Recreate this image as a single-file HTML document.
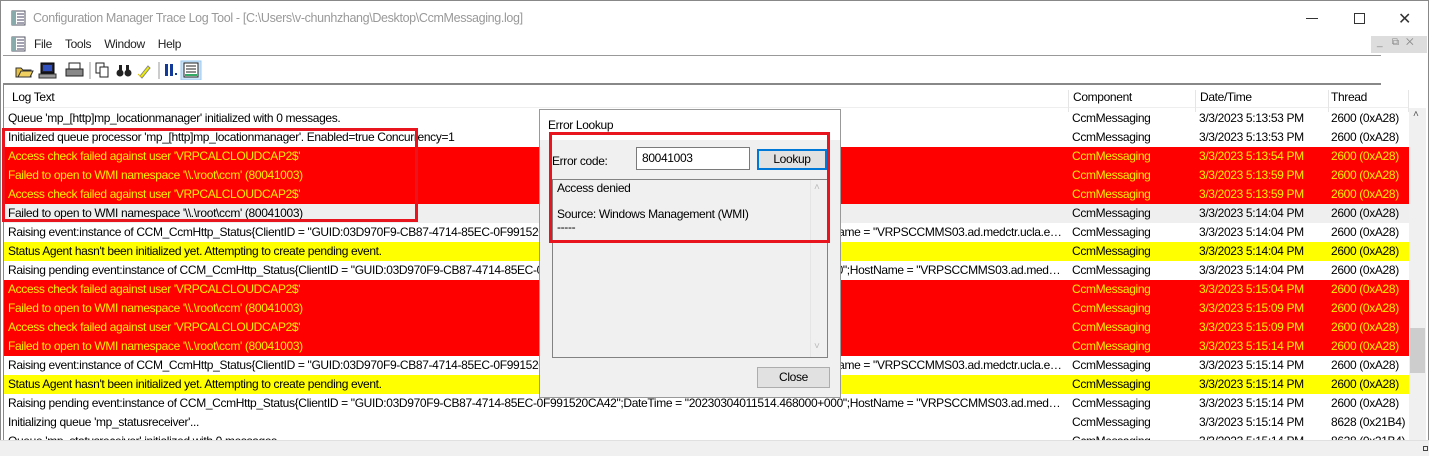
<!DOCTYPE html>
<html><head><style>
*{margin:0;padding:0;box-sizing:border-box}
body{width:1429px;height:456px;overflow:hidden;background:#f0f0f0;font-family:"Liberation Sans",sans-serif;font-size:12px;color:#000;position:relative;letter-spacing:-0.35px}
.abs{position:absolute}
.win{left:0;top:0;width:1429px;height:456px;background:#fff;border:1px solid #888}
.title{left:33px;top:11px;font-size:12.5px;color:#999;white-space:nowrap}
.menu{left:34px;top:37px;font-size:12px;color:#222}
.menu span{margin-right:13px}
.row{position:absolute;left:4px;width:1405px;height:19px;line-height:19px;white-space:nowrap}
.row .t{position:absolute;left:4px;width:1058px;overflow:hidden;text-overflow:ellipsis}
.row .c{position:absolute;left:1068px}
.row .d{position:absolute;left:1195px}
.row .h{position:absolute;left:1327px}
.r{background:#ff0000;color:#ffee00}
.y{background:#ffff00}
.s{background:#efefef}
.hdr{left:4px;top:86px;width:1405px;height:22px;background:#fff;border-bottom:1px solid #eee}
.hdr div{position:absolute;top:4px}
.sep{position:absolute;top:0;width:1px;height:22px;background:#e5e5e5}
</style></head><body>
<div class="abs win"></div>
<svg class="abs" style="left:11px;top:10px" width="16" height="16"><rect x="1" y="1" width="13" height="14" fill="#fff" stroke="#556"/><rect x="1" y="1" width="4" height="14" fill="#8aa"/><g stroke="#446"><line x1="6" y1="4" x2="13" y2="4"/><line x1="6" y1="7" x2="13" y2="7"/><line x1="6" y1="10" x2="13" y2="10"/><line x1="6" y1="13" x2="13" y2="13"/></g></svg>
<div class="abs title">Configuration Manager Trace Log Tool - [C:\Users\v-chunhzhang\Desktop\CcmMessaging.log]</div>
<div class="abs" style="left:1306px;top:18px;width:12px;height:1px;background:#333"></div>
<div class="abs" style="left:1354px;top:13px;width:11px;height:11px;border:1px solid #333"></div>
<div class="abs" style="left:1398px;top:9px;font-size:16px;color:#333">✕</div>
<svg class="abs" style="left:11px;top:36px" width="16" height="16"><rect x="1" y="1" width="13" height="14" fill="#fff" stroke="#556"/><rect x="1" y="1" width="4" height="14" fill="#8aa"/><g stroke="#446"><line x1="6" y1="4" x2="13" y2="4"/><line x1="6" y1="7" x2="13" y2="7"/><line x1="6" y1="10" x2="13" y2="10"/><line x1="6" y1="13" x2="13" y2="13"/></g></svg>
<div class="abs menu"><span>File</span><span>Tools</span><span>Window</span><span>Help</span></div>
<div class="abs" style="left:1371px;top:36px;width:56px;height:17px;background:#ddd"></div>
<div class="abs" style="left:1377px;top:37px;font-size:10px;color:#888">_&nbsp;&nbsp;&nbsp;&nbsp;⧉&nbsp;&nbsp;&nbsp;✕</div>
<div class="abs" style="left:3px;top:55px;width:1378px;height:1px;background:#999"></div>
<svg class="abs" style="left:14px;top:60px" width="210" height="20">
<path d="M2 8h5l2 2h8v7H2z" fill="#e8c040" stroke="#333"/><path d="M4 17l3-6h12l-3 6z" fill="#f0d060" stroke="#333"/>
<rect x="27" y="3" width="13" height="10" fill="#223" stroke="#000"/><rect x="29" y="5" width="9" height="6" fill="#3050c0"/><rect x="25" y="14" width="17" height="4" fill="#999" stroke="#333"/>
<rect x="52" y="9" width="17" height="7" fill="#888" stroke="#222"/><rect x="55" y="3" width="11" height="6" fill="#fff" stroke="#222"/>
<line x1="76" y1="2" x2="76" y2="19" stroke="#999"/>
<rect x="82" y="3" width="8" height="10" fill="#fff" stroke="#222"/><rect x="86" y="7" width="8" height="10" fill="#fff" stroke="#222"/>
<circle cx="106" cy="13" r="3.5" fill="#222"/><circle cx="114" cy="13" r="3.5" fill="#222"/><rect x="105" y="5" width="3" height="6" fill="#222"/><rect x="112" y="5" width="3" height="6" fill="#222"/>
<path d="M126 16l8-10 2 2-8 10z" fill="#ee0" stroke="#888"/><path d="M124 14l3 3" stroke="#e0c000"/>
<line x1="145" y1="2" x2="145" y2="19" stroke="#999"/>
<rect x="151" y="4" width="3" height="12" fill="#123a9a"/><rect x="156" y="4" width="3" height="12" fill="#123a9a"/><rect x="161" y="13" width="2" height="2" fill="#123a9a"/>
<rect x="167" y="1" width="20" height="19" fill="#cce4f7" stroke="#99c9ef"/><rect x="170" y="3" width="14" height="14" fill="#fff" stroke="#222"/><g stroke="#222"><line x1="172" y1="6" x2="182" y2="6"/><line x1="172" y1="9" x2="182" y2="9"/><line x1="172" y1="12" x2="182" y2="12"/></g><rect x="171" y="14" width="12" height="2" fill="#3a6"/>
</svg>
<div class="abs" style="left:3px;top:83px;width:1378px;height:2px;background:#888"></div>
<div class="abs" style="left:3px;top:85px;width:1px;height:355px;background:#888"></div>
<div class="abs hdr">
<div style="left:8px">Log Text</div><div class="sep" style="left:1064px"></div>
<div style="left:1069px">Component</div><div class="sep" style="left:1191px"></div>
<div style="left:1196px">Date/Time</div><div class="sep" style="left:1324px"></div>
<div style="left:1327px">Thread</div><div class="sep" style="left:1404px"></div>
</div>
<div class="row" style="top:109px"><span class="t">Queue 'mp_[http]mp_locationmanager' initialized with 0 messages.</span><span class="c">CcmMessaging</span><span class="d">3/3/2023 5:13:53 PM</span><span class="h">2600 (0xA28)</span></div>
<div class="row" style="top:128px"><span class="t">Initialized queue processor 'mp_[http]mp_locationmanager'. Enabled=true Concurrency=1</span><span class="c">CcmMessaging</span><span class="d">3/3/2023 5:13:53 PM</span><span class="h">2600 (0xA28)</span></div>
<div class="row r" style="top:147px"><span class="t">Access check failed against user 'VRPCALCLOUDCAP2$'</span><span class="c">CcmMessaging</span><span class="d">3/3/2023 5:13:54 PM</span><span class="h">2600 (0xA28)</span></div>
<div class="row r" style="top:166px"><span class="t">Failed to open to WMI namespace '\\.\root\ccm' (80041003)</span><span class="c">CcmMessaging</span><span class="d">3/3/2023 5:13:59 PM</span><span class="h">2600 (0xA28)</span></div>
<div class="row r" style="top:185px"><span class="t">Access check failed against user 'VRPCALCLOUDCAP2$'</span><span class="c">CcmMessaging</span><span class="d">3/3/2023 5:13:59 PM</span><span class="h">2600 (0xA28)</span></div>
<div class="row s" style="top:204px"><span class="t">Failed to open to WMI namespace '\\.\root\ccm' (80041003)</span><span class="c">CcmMessaging</span><span class="d">3/3/2023 5:14:04 PM</span><span class="h">2600 (0xA28)</span></div>
<div class="row" style="top:223px"><span class="t">Raising event:instance of CCM_CcmHttp_Status{ClientID = "GUID:03D970F9-CB87-4714-85EC-0F991520CA42";DateTime = "20230304011404.468000+000";HostName = "VRPSCCMMS03.ad.medctr.ucla.edu";HRESULT = "0x00000000";</span><span class="c">CcmMessaging</span><span class="d">3/3/2023 5:14:04 PM</span><span class="h">2600 (0xA28)</span></div>
<div class="row y" style="top:242px"><span class="t">Status Agent hasn't been initialized yet. Attempting to create pending event.</span><span class="c">CcmMessaging</span><span class="d">3/3/2023 5:14:04 PM</span><span class="h">2600 (0xA28)</span></div>
<div class="row" style="top:261px"><span class="t">Raising pending event:instance of CCM_CcmHttp_Status{ClientID = "GUID:03D970F9-CB87-4714-85EC-0F991520CA42";DateTime = "20230304011404.468000+000";HostName = "VRPSCCMMS03.ad.medctr.ucla.edu";</span><span class="c">CcmMessaging</span><span class="d">3/3/2023 5:14:04 PM</span><span class="h">2600 (0xA28)</span></div>
<div class="row r" style="top:280px"><span class="t">Access check failed against user 'VRPCALCLOUDCAP2$'</span><span class="c">CcmMessaging</span><span class="d">3/3/2023 5:15:04 PM</span><span class="h">2600 (0xA28)</span></div>
<div class="row r" style="top:299px"><span class="t">Failed to open to WMI namespace '\\.\root\ccm' (80041003)</span><span class="c">CcmMessaging</span><span class="d">3/3/2023 5:15:09 PM</span><span class="h">2600 (0xA28)</span></div>
<div class="row r" style="top:318px"><span class="t">Access check failed against user 'VRPCALCLOUDCAP2$'</span><span class="c">CcmMessaging</span><span class="d">3/3/2023 5:15:09 PM</span><span class="h">2600 (0xA28)</span></div>
<div class="row r" style="top:337px"><span class="t">Failed to open to WMI namespace '\\.\root\ccm' (80041003)</span><span class="c">CcmMessaging</span><span class="d">3/3/2023 5:15:14 PM</span><span class="h">2600 (0xA28)</span></div>
<div class="row" style="top:356px"><span class="t">Raising event:instance of CCM_CcmHttp_Status{ClientID = "GUID:03D970F9-CB87-4714-85EC-0F991520CA42";DateTime = "20230304011514.468000+000";HostName = "VRPSCCMMS03.ad.medctr.ucla.edu";HRESULT = "0x00000000";</span><span class="c">CcmMessaging</span><span class="d">3/3/2023 5:15:14 PM</span><span class="h">2600 (0xA28)</span></div>
<div class="row y" style="top:375px"><span class="t">Status Agent hasn't been initialized yet. Attempting to create pending event.</span><span class="c">CcmMessaging</span><span class="d">3/3/2023 5:15:14 PM</span><span class="h">2600 (0xA28)</span></div>
<div class="row" style="top:394px"><span class="t">Raising pending event:instance of CCM_CcmHttp_Status{ClientID = "GUID:03D970F9-CB87-4714-85EC-0F991520CA42";DateTime = "20230304011514.468000+000";HostName = "VRPSCCMMS03.ad.medctr.ucla.edu";</span><span class="c">CcmMessaging</span><span class="d">3/3/2023 5:15:14 PM</span><span class="h">2600 (0xA28)</span></div>
<div class="row" style="top:413px"><span class="t">Initializing queue 'mp_statusreceiver'...</span><span class="c">CcmMessaging</span><span class="d">3/3/2023 5:15:14 PM</span><span class="h">8628 (0x21B4)</span></div>
<div class="row" style="top:432px"><span class="t">Queue 'mp_statusreceiver' initialized with 0 messages.</span><span class="c">CcmMessaging</span><span class="d">3/3/2023 5:15:14 PM</span><span class="h">8628 (0x21B4)</span></div>
<div class="abs" style="left:0;top:440px;width:1429px;height:16px;background:#f0f0f0;border-top:1px solid #e0e0e0"></div>
<div class="abs" style="left:1423px;top:446px;width:5px;height:5px;border:1px solid #444"></div>
<div class="abs" style="left:1409px;top:108px;width:17px;height:332px;background:#f0f0f0"></div>
<div class="abs" style="left:1413px;top:109px;font-size:10px;color:#555">˄</div>
<div class="abs" style="left:1410px;top:328px;width:15px;height:45px;background:#cdcdcd"></div>
<div class="abs" style="left:2px;top:128px;width:416px;height:94px;border:3px solid #e8141e"></div>
<div class="abs" style="left:539px;top:109px;width:302px;height:289px;background:#f0f0f0;border:1px solid #999"></div>
<div class="abs" style="left:540px;top:110px;width:300px;height:30px;background:#fff"></div>
<div class="abs" style="left:548px;top:118px">Error Lookup</div>
<div class="abs" style="left:552px;top:154px">Error code:</div>
<div class="abs" style="left:636px;top:147px;width:114px;height:23px;background:#fff;border:1px solid #7a7a7a;padding:3px 5px">80041003</div>
<div class="abs" style="left:757px;top:149px;width:70px;height:21px;background:#e1e1e1;border:2px solid #0078d7;text-align:center;line-height:17px">Lookup</div>
<div class="abs" style="left:552px;top:179px;width:276px;height:179px;background:#f0f0f0;border:1px solid #828282"></div>
<div class="abs" style="left:810px;top:180px;width:17px;height:177px;background:#f0f0f0;border-left:1px solid #e5e5e5"></div>
<div class="abs" style="left:814px;top:182px;font-size:10px;color:#bbb">˄</div>
<div class="abs" style="left:814px;top:341px;font-size:10px;color:#bbb">˅</div>
<div class="abs" style="left:557px;top:182px;line-height:13px">Access denied<br><br>Source: Windows Management (WMI)<br>-----</div>
<div class="abs" style="left:757px;top:367px;width:73px;height:21px;background:#e1e1e1;border:1px solid #adadad;text-align:center;line-height:19px">Close</div>
<div class="abs" style="left:549px;top:132px;width:281px;height:111px;border:3px solid #e8141e"></div>
</body></html>
